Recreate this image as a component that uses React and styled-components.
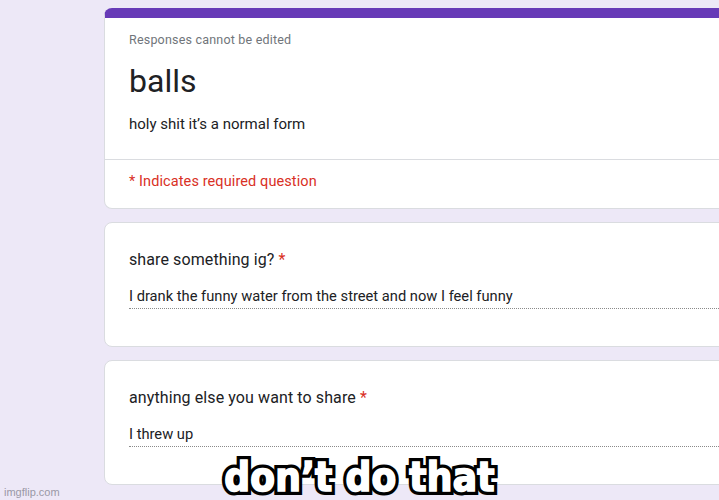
import styled, { createGlobalStyle } from 'styled-components';

const Global = createGlobalStyle`
    html, body {
        margin: 0;
        padding: 0;
        background: #ede8f7;
        overflow: hidden;
    }
    body {
        font-family: Roboto, "Liberation Sans", sans-serif;
        color: #202124;
    }
`;

const caption = 'don’t do that';

const App = () => {
    return (
        <>
            <Global />
            <Page>
                <Column>
                    <Card accent>
                        <HeaderTop>
                            <Notice>Responses cannot be edited</Notice>
                            <Title>balls</Title>
                            <Description>holy shit it’s a normal form</Description>
                        </HeaderTop>
                        <Required>* Indicates required question</Required>
                    </Card>

                    <Card>
                        <Question>
                            share something ig? <Star>*</Star>
                        </Question>
                        <Answer>I drank the funny water from the street and now I feel funny</Answer>
                    </Card>

                    <Card>
                        <Question>
                            anything else you want to share <Star>*</Star>
                        </Question>
                        <Answer>I threw up</Answer>
                    </Card>
                </Column>
                <Watermark>imgflip.com</Watermark>
                <Caption data-text={caption}>{caption}</Caption>
            </Page>
        </>
    );
};

const Page = styled.div`
    position: relative;
    width: 719px;
    height: 500px;
    overflow: hidden;
`;

const Column = styled.div`
    display: flex;
    flex-direction: column;
    gap: 13px;
    width: 660px;
    padding: 8px 0 0 104px;
`;

const Card = styled.div`
    background: #fff;
    border: 1px solid #dadce0;
    border-radius: 8px;
    overflow: hidden;
    padding: ${p => (p.accent ? '0' : '25px 0 37px 24px')};
    ${p => p.accent && `
        border-top: 10px solid #673ab7;
    `}
`;

const HeaderTop = styled.div`
    padding: 13px 24px 25px 24px;
    border-bottom: 1px solid #dadce0;
`;

const Notice = styled.div`
    font-size: 12.5px;
    color: #70757a;
    line-height: 18px;
    letter-spacing: 0.2px;
`;

const Title = styled.div`
    font-size: 32px;
    line-height: 40px;
    margin-top: 12px;
    color: #202124;
`;

const Description = styled.div`
    font-size: 15px;
    line-height: 20px;
    margin-top: 13px;
    color: #202124;
`;

const Required = styled.div`
    padding: 12px 24px 16px 24px;
    font-size: 14.5px;
    line-height: 20px;
    color: #d93025;
    letter-spacing: 0.1px;
`;

const Question = styled.div`
    font-size: 16px;
    line-height: 24px;
    color: #202124;
    letter-spacing: 0.1px;
`;

const Star = styled.span`
    color: #d93025;
`;

const Answer = styled.div`
    margin-top: 14px;
    font-size: 14.7px;
    line-height: 20px;
    padding-bottom: 2px;
    border-bottom: 1px dotted #8a8a8a;
    color: #202124;
`;

const Watermark = styled.div`
    position: absolute;
    left: 4px;
    bottom: 2px;
    font-family: "Liberation Sans", Arial, sans-serif;
    font-size: 11px;
    color: #9a98a6;
`;

const Caption = styled.div`
    position: absolute;
    left: 0;
    right: 0;
    bottom: 2px;
    text-align: center;
    font-family: "DejaVu Sans", sans-serif;
    font-stretch: condensed;
    font-weight: bold;
    font-size: 40px;
    line-height: 42px;
    color: #fff;
    letter-spacing: 0.3px;
    -webkit-text-stroke: 8px #000;
    paint-order: stroke fill;
    text-shadow: 0 0 4px rgba(0, 0, 0, 0.6);

    &::after {
        content: attr(data-text);
        position: absolute;
        left: 0;
        right: 0;
        top: 0;
        -webkit-text-stroke: 1.6px #fff;
        text-shadow: none;
    }
`;

export default App;
